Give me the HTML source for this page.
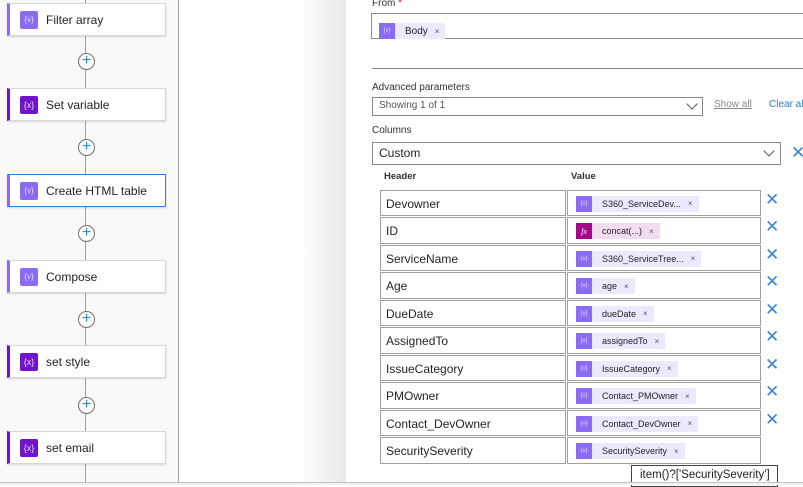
<!DOCTYPE html>
<html><head><meta charset="utf-8"><style>
*{box-sizing:border-box;margin:0;padding:0}
body{width:803px;height:485px;overflow:hidden;position:relative;background:#fff;font-family:"Segoe UI","Liberation Sans",sans-serif;color:#242424}
.canvas{position:absolute;left:0;top:0;width:179px;height:482px;background:#faf9f8;border-right:1px solid #a8a8a8}
.line{position:absolute;left:85px;width:1px;background:#9e9e9e;top:0;height:482px}
.card{position:absolute;left:7px;width:159px;height:33px;background:#fff;border:1px solid #d6d6d6;border-left:3px solid #8a6cf4;box-shadow:0 1px 2px rgba(0,0,0,.15);font-size:12px;display:flex;align-items:center}
.card.v{border-left-color:#7212cc}
.card.sel{border:1px solid #2f7fd8;border-left:3px solid #8a6cf4}
.ic{width:18px;height:18px;margin-left:10px;margin-right:8px;background:#8a6cf4;color:#e6ddff;font-size:8px;display:flex;align-items:center;justify-content:center;border-radius:2px}
.v .ic{background:#7212cc;font-size:9px}
.plus{position:absolute;left:78px;width:17px;height:17px;border-radius:50%;border:1px solid #707070;background:#fff;color:#2f8de4;font-size:16px;line-height:14px;text-align:center}
.shadow{position:absolute;left:300px;top:0;width:46px;height:482px;background:linear-gradient(90deg,rgba(255,255,255,0),rgba(0,0,0,.09))}
.panel{position:absolute;left:346px;top:0;width:457px;height:482px;background:#fff}
.bottom{position:absolute;left:0;top:482px;width:803px;height:3px;background:#f0f0f0;border-top:1px solid #c4c4c4}
.lbl{position:absolute;font-size:10px;color:#323130;white-space:nowrap}
.box{position:absolute;border:1px solid #8a8a8a;background:#fff}
.tok{display:inline-flex;align-items:center;height:16px;background:#ece8fd;font-size:9px;color:#242424;padding-right:6px;white-space:nowrap}
.tok i{width:16px;height:16px;background:#8a6cf4;color:#e6ddff;font-style:normal;font-size:6px;display:flex;align-items:center;justify-content:center;margin-right:10px}
.tok.fx{background:#f3dcee}.tok.fx i{background:#a5078a;font-size:8px;color:#fff;font-style:italic;font-family:"Liberation Serif",serif}
.tok b{font-weight:normal;margin-left:7px;font-size:8px;color:#555}
.cell{position:absolute;height:26.5px;border:1px solid #a0a0a0;font-size:12px;display:flex;align-items:center;padding-left:5px;padding-top:2px}
.x{position:absolute;color:#3a86d4;font-size:17px;line-height:14px}
.chev{position:absolute;width:8px;height:8px;border-right:1px solid #555;border-bottom:1px solid #555;transform:rotate(45deg)}
</style></head><body>
<div class="canvas">
<div class="line"></div>
<div class="card" style="top:3px"><div class="ic">{v}</div>Filter array</div>
<div class="plus" style="top:53px">+</div>
<div class="card v" style="top:88px"><div class="ic">{x}</div>Set variable</div>
<div class="plus" style="top:139px">+</div>
<div class="card sel" style="top:174px"><div class="ic">{v}</div>Create HTML table</div>
<div class="plus" style="top:225px">+</div>
<div class="card" style="top:260px"><div class="ic">{v}</div>Compose</div>
<div class="plus" style="top:311px">+</div>
<div class="card v" style="top:345px"><div class="ic">{x}</div>set style</div>
<div class="plus" style="top:397px">+</div>
<div class="card v" style="top:431px"><div class="ic">{x}</div>set email</div>
</div>
<div class="shadow"></div>
<div class="panel"></div>
<div class="lbl" style="left:372px;top:-2px">From <span style="color:#c4314b">*</span></div>
<div class="box" style="left:371px;top:13px;width:440px;height:26px;padding:5px 0 0 7px"><span class="tok" style="font-size:10px"><i>{v}</i>Body<b>×</b></span></div>
<div style="position:absolute;left:372px;top:68px;width:431px;height:1px;background:#8a8a8a"></div>
<div class="lbl" style="left:372px;top:82px">Advanced parameters</div>
<div class="box" style="left:372px;top:97px;width:331px;height:19px;font-size:10px;color:#555;padding:2px 0 0 6px">Showing 1 of 1</div>
<div class="chev" style="left:688px;top:100px"></div>
<div class="lbl" style="left:714px;top:99px;color:#8a8a8a;text-decoration:underline">Show all</div>
<div class="lbl" style="left:769px;top:99px;color:#2f7fd8">Clear al</div>
<div class="lbl" style="left:372px;top:125px">Columns</div>
<div class="box" style="left:372px;top:142px;width:409px;height:23px;font-size:12px;padding:3px 0 0 6px">Custom</div>
<div class="chev" style="left:765px;top:147px"></div>
<div class="x" style="left:791px;top:146px">✕</div>
<div class="lbl" style="left:384px;top:171px;font-weight:bold;font-size:9.5px">Header</div>
<div class="lbl" style="left:571px;top:171px;font-weight:bold;font-size:9.5px">Value</div>
<div id="t"></div>
<script>
var r=[["Devowner","S360_ServiceDev...",0],["ID","concat(...)",1],["ServiceName","S360_ServiceTree...",0],["Age","age",0],["DueDate","dueDate",0],["AssignedTo","assignedTo",0],["IssueCategory","IssueCategory",0],["PMOwner","Contact_PMOwner",0],["Contact_DevOwner","Contact_DevOwner",0],["SecuritySeverity","SecuritySeverity",0]];
var h="";r.forEach(function(a,i){var t=189.5+i*27.5;
h+='<div class="cell" style="left:380px;top:'+t+'px;width:186px">'+a[0]+'</div>';
h+='<div class="cell" style="left:567px;top:'+t+'px;width:194px;padding-left:8px"><span class="tok'+(a[2]?' fx':'')+'"><i>'+(a[2]?'fx':'{v}')+'</i>'+a[1]+'<b>×</b></span></div>';
if(i<9)h+='<div class="x" style="left:765px;top:'+(t+3)+'px">✕</div>';});
document.getElementById("t").innerHTML=h;
</script>
<div style="position:absolute;left:631px;top:465px;width:147px;height:22px;background:#fff;border:1px solid #444;font-size:11.5px;padding:3px 0 0 8px">item()?['SecuritySeverity']</div>
<div class="bottom"></div>
</body></html>
